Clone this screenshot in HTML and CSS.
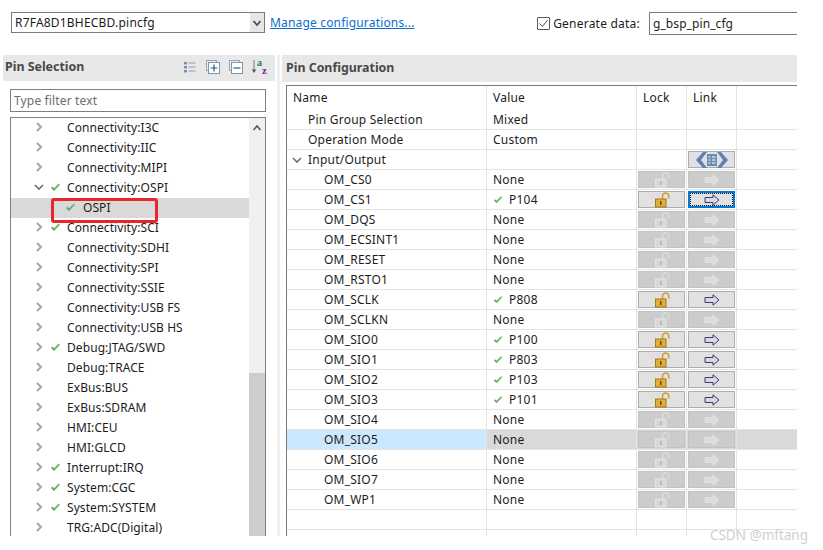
FILE: index.html
```html
<!DOCTYPE html>
<html lang="en">
<head>
<meta charset="utf-8">
<title>Pin Configuration</title>
<link rel="stylesheet" href="styles.css">
</head>
<body>
<svg class="defs" width="0" height="0" aria-hidden="true">
  <symbol id="chev-r" viewBox="0 0 10 10"><path d="M3 1l4 4-4 4" fill="none" stroke="#a6a6a6" stroke-width="2"/></symbol>
  <symbol id="chev-d" viewBox="0 0 10 10"><path d="M1 3l4 4 4-4" fill="none" stroke="#6e6e6e" stroke-width="1.6"/></symbol>
  <symbol id="check" viewBox="0 0 10 10"><path d="M1 5.5l2.6 2.6L9 2.2 8 1.6 3.6 5.8 2.2 4.4z" fill="#5aa75a" stroke="#8cc98c" stroke-width=".5"/></symbol>
  <symbol id="lock-on" viewBox="0 0 16 16"><path d="M8.5 7V4a3.2 3.2 0 0 1 6.2-1V6.5" fill="none" stroke="#d3a02c" stroke-width="1.5"/><rect x="1.5" y="7" width="10.5" height="8" fill="#e2ad38" stroke="#a9781a"/><rect x="6" y="9" width="1.6" height="4" fill="#6d4c0f"/></symbol>
  <symbol id="lock-off" viewBox="0 0 16 16"><path d="M8.5 7V4a3.2 3.2 0 0 1 6.2-1V6.5" fill="none" stroke="#dedede" stroke-width="1.3"/><rect x="1.5" y="7" width="10.5" height="8" fill="#d8d8d8" stroke="#e4e4e4"/><rect x="6" y="9" width="1.6" height="4" fill="#b4b4b4"/></symbol>
  <symbol id="arrow-on" viewBox="0 0 16 12"><path d="M1 3.5h8V.8L15 6l-6 5.2V8.5H1z" fill="#d9d6ee" stroke="#3e3e58"/></symbol>
  <symbol id="arrow-off" viewBox="0 0 16 12"><path d="M1 3.5h8V.8L15 6l-6 5.2V8.5H1z" fill="#dcdcdc" stroke="#e2e2e2"/></symbol>
</svg>

<div class="page">
  <header class="topbar">
    <div class="combo">
      <span class="combo-text">R7FA8D1BHECBD.pincfg</span>
      <span class="combo-btn"><svg width="10" height="10" viewBox="0 0 10 10"><path d="M1.5 3l3.5 4 3.5-4" fill="none" stroke="#444" stroke-width="1.6"/></svg></span>
    </div>
    <a class="manage" href="#">Manage configurations...</a>
    <span class="spacer"></span>
    <span class="checkbox"><svg width="11" height="11" viewBox="0 0 11 11"><path d="M1.5 5.5l3 3 5-6.5" fill="none" stroke="#555" stroke-width="1"/></svg></span>
    <span class="gen-label">Generate data:</span>
    <div class="gen-input">g_bsp_pin_cfg</div>
  </header>

  <main class="panels">
    <section class="left">
      <div class="title-bar left-title">
        <span class="title">Pin Selection</span>
        <span class="tools">
          <svg width="14" height="14" viewBox="0 0 14 14"><g fill="#6f8fb0"><rect x="1" y="2" width="3" height="2.4"/><rect x="1" y="6" width="3" height="2.4"/><rect x="1" y="10" width="3" height="2.4"/></g><g stroke="#8aa0b8"><path d="M5.5 3h7M5.5 7h7M5.5 11h7"/></g></svg>
          <svg width="14" height="14" viewBox="0 0 14 14"><rect x=".5" y=".5" width="10" height="10" fill="#eef0f4" stroke="#9aa5b4"/><rect x="2.5" y="2.5" width="11" height="11" fill="#fff" stroke="#7f93ab"/><path d="M8 4.5v7M4.500 8h7" stroke="#1d5b8a" stroke-width="1.2"/></svg>
          <svg width="14" height="14" viewBox="0 0 14 14"><rect x=".5" y=".5" width="10" height="10" fill="#eef0f4" stroke="#9aa5b4"/><rect x="2.5" y="2.5" width="11" height="11" fill="#fff" stroke="#7f93ab"/><path d="M4.500 8h7" stroke="#1d5b8a" stroke-width="1.2"/></svg>
          <svg class="az" width="18" height="22" viewBox="0 0 18 22"><path d="M3 4v11" stroke="#777"/><path d="M.8 13.500L3 17l2.200-3.500z" fill="#555"/><text x="6" y="10" class="az-a">a<tspan class="az-z" dy="8">z</tspan></text></svg>
        </span>
      </div>
      <div class="filter">Type filter text</div>
      <div class="tree">
        <div class="tree-list">
          <div class="node"><svg class="tw"><use href="#chev-r"/></svg><span class="ck"></span>Connectivity:I3C</div>
          <div class="node"><svg class="tw"><use href="#chev-r"/></svg><span class="ck"></span>Connectivity:IIC</div>
          <div class="node"><svg class="tw"><use href="#chev-r"/></svg><span class="ck"></span>Connectivity:MIPI</div>
          <div class="node"><svg class="tw"><use href="#chev-d"/></svg><svg class="ck"><use href="#check"/></svg>Connectivity:OSPI</div>
          <div class="node child selected"><svg class="ck"><use href="#check"/></svg>OSPI</div>
          <div class="node"><svg class="tw"><use href="#chev-r"/></svg><svg class="ck"><use href="#check"/></svg>Connectivity:SCI</div>
          <div class="node"><svg class="tw"><use href="#chev-r"/></svg><span class="ck"></span>Connectivity:SDHI</div>
          <div class="node"><svg class="tw"><use href="#chev-r"/></svg><span class="ck"></span>Connectivity:SPI</div>
          <div class="node"><svg class="tw"><use href="#chev-r"/></svg><span class="ck"></span>Connectivity:SSIE</div>
          <div class="node"><svg class="tw"><use href="#chev-r"/></svg><span class="ck"></span>Connectivity:USB FS</div>
          <div class="node"><svg class="tw"><use href="#chev-r"/></svg><span class="ck"></span>Connectivity:USB HS</div>
          <div class="node"><svg class="tw"><use href="#chev-r"/></svg><svg class="ck"><use href="#check"/></svg>Debug:JTAG/SWD</div>
          <div class="node"><svg class="tw"><use href="#chev-r"/></svg><span class="ck"></span>Debug:TRACE</div>
          <div class="node"><svg class="tw"><use href="#chev-r"/></svg><span class="ck"></span>ExBus:BUS</div>
          <div class="node"><svg class="tw"><use href="#chev-r"/></svg><span class="ck"></span>ExBus:SDRAM</div>
          <div class="node"><svg class="tw"><use href="#chev-r"/></svg><span class="ck"></span>HMI:CEU</div>
          <div class="node"><svg class="tw"><use href="#chev-r"/></svg><span class="ck"></span>HMI:GLCD</div>
          <div class="node"><svg class="tw"><use href="#chev-r"/></svg><svg class="ck"><use href="#check"/></svg>Interrupt:IRQ</div>
          <div class="node"><svg class="tw"><use href="#chev-r"/></svg><svg class="ck"><use href="#check"/></svg>System:CGC</div>
          <div class="node"><svg class="tw"><use href="#chev-r"/></svg><svg class="ck"><use href="#check"/></svg>System:SYSTEM</div>
          <div class="node"><svg class="tw"><use href="#chev-r"/></svg><span class="ck"></span>TRG:ADC(Digital)</div>
        </div>
        <div class="scrollbar">
          <span class="scroll-up"><svg width="10" height="10" viewBox="0 0 10 10"><path d="M1.500 7L5 3l3.500 4" fill="none" stroke="#555" stroke-width="1.600"/></svg></span>
          <span class="scroll-thumb"></span>
        </div>
        <div class="callout"></div>
      </div>
    </section>

    <div class="sash"></div>

    <section class="right">
      <div class="title-bar right-title"><span class="title">Pin Configuration</span></div>
      <div class="table">
        <div class="row head"><div class="c name">Name</div><div class="c value">Value</div><div class="c lock">Lock</div><div class="c link">Link</div><div class="c fill"></div></div>
        <div class="row"><div class="c name l1">Pin Group Selection</div><div class="c value">Mixed</div><div class="c lock"></div><div class="c link"></div><div class="c fill"></div></div>
        <div class="row"><div class="c name l1">Operation Mode</div><div class="c value">Custom</div><div class="c lock"></div><div class="c link"></div><div class="c fill"></div></div>
        <div class="row"><div class="c name group"><svg class="tw2"><use href="#chev-d"/></svg>Input/Output</div><div class="c value"></div><div class="c lock"></div><div class="c link"><span class="btn on"><svg width="34" height="16" viewBox="0 0 34 16"><path d="M8 0L1 8l7 8h4L6 8l6-8z" fill="#5b84b1"/><path d="M26 0l7 8-7 8h-4l6-8-6-8z" fill="#5b84b1"/><rect x="12" y="2" width="10" height="12" fill="#6a8db3"/><path d="M13.500 5h2M13.500 8h2M13.500 11h2M17 5h3.500M17 8h3.500M17 11h3.500" stroke="#fff"/></svg></span></div><div class="c fill"></div></div>

        <div class="row"><div class="c name l2">OM_CS0</div><div class="c value">None</div><div class="c lock"><span class="btn"><svg class="lk"><use href="#lock-off"/></svg></span></div><div class="c link"><span class="btn"><svg class="ar"><use href="#arrow-off"/></svg></span></div><div class="c fill"></div></div>
        <div class="row"><div class="c name l2">OM_CS1</div><div class="c value"><svg class="vck"><use href="#check"/></svg>P104</div><div class="c lock"><span class="btn on"><svg class="lk"><use href="#lock-on"/></svg></span></div><div class="c link"><span class="btn on focus"><svg class="ar"><use href="#arrow-on"/></svg></span></div><div class="c fill"></div></div>
        <div class="row"><div class="c name l2">OM_DQS</div><div class="c value">None</div><div class="c lock"><span class="btn"><svg class="lk"><use href="#lock-off"/></svg></span></div><div class="c link"><span class="btn"><svg class="ar"><use href="#arrow-off"/></svg></span></div><div class="c fill"></div></div>
        <div class="row"><div class="c name l2">OM_ECSINT1</div><div class="c value">None</div><div class="c lock"><span class="btn"><svg class="lk"><use href="#lock-off"/></svg></span></div><div class="c link"><span class="btn"><svg class="ar"><use href="#arrow-off"/></svg></span></div><div class="c fill"></div></div>
        <div class="row"><div class="c name l2">OM_RESET</div><div class="c value">None</div><div class="c lock"><span class="btn"><svg class="lk"><use href="#lock-off"/></svg></span></div><div class="c link"><span class="btn"><svg class="ar"><use href="#arrow-off"/></svg></span></div><div class="c fill"></div></div>
        <div class="row"><div class="c name l2">OM_RSTO1</div><div class="c value">None</div><div class="c lock"><span class="btn"><svg class="lk"><use href="#lock-off"/></svg></span></div><div class="c link"><span class="btn"><svg class="ar"><use href="#arrow-off"/></svg></span></div><div class="c fill"></div></div>
        <div class="row"><div class="c name l2">OM_SCLK</div><div class="c value"><svg class="vck"><use href="#check"/></svg>P808</div><div class="c lock"><span class="btn on"><svg class="lk"><use href="#lock-on"/></svg></span></div><div class="c link"><span class="btn on"><svg class="ar"><use href="#arrow-on"/></svg></span></div><div class="c fill"></div></div>
        <div class="row"><div class="c name l2">OM_SCLKN</div><div class="c value">None</div><div class="c lock"><span class="btn"><svg class="lk"><use href="#lock-off"/></svg></span></div><div class="c link"><span class="btn"><svg class="ar"><use href="#arrow-off"/></svg></span></div><div class="c fill"></div></div>
        <div class="row"><div class="c name l2">OM_SIO0</div><div class="c value"><svg class="vck"><use href="#check"/></svg>P100</div><div class="c lock"><span class="btn on"><svg class="lk"><use href="#lock-on"/></svg></span></div><div class="c link"><span class="btn on"><svg class="ar"><use href="#arrow-on"/></svg></span></div><div class="c fill"></div></div>
        <div class="row"><div class="c name l2">OM_SIO1</div><div class="c value"><svg class="vck"><use href="#check"/></svg>P803</div><div class="c lock"><span class="btn on"><svg class="lk"><use href="#lock-on"/></svg></span></div><div class="c link"><span class="btn on"><svg class="ar"><use href="#arrow-on"/></svg></span></div><div class="c fill"></div></div>
        <div class="row"><div class="c name l2">OM_SIO2</div><div class="c value"><svg class="vck"><use href="#check"/></svg>P103</div><div class="c lock"><span class="btn on"><svg class="lk"><use href="#lock-on"/></svg></span></div><div class="c link"><span class="btn on"><svg class="ar"><use href="#arrow-on"/></svg></span></div><div class="c fill"></div></div>
        <div class="row"><div class="c name l2">OM_SIO3</div><div class="c value"><svg class="vck"><use href="#check"/></svg>P101</div><div class="c lock"><span class="btn on"><svg class="lk"><use href="#lock-on"/></svg></span></div><div class="c link"><span class="btn on"><svg class="ar"><use href="#arrow-on"/></svg></span></div><div class="c fill"></div></div>
        <div class="row"><div class="c name l2">OM_SIO4</div><div class="c value">None</div><div class="c lock"><span class="btn"><svg class="lk"><use href="#lock-off"/></svg></span></div><div class="c link"><span class="btn"><svg class="ar"><use href="#arrow-off"/></svg></span></div><div class="c fill"></div></div>
        <div class="row sel"><div class="c name l2">OM_SIO5</div><div class="c value">None</div><div class="c lock"><span class="btn"><svg class="lk"><use href="#lock-off"/></svg></span></div><div class="c link"><span class="btn"><svg class="ar"><use href="#arrow-off"/></svg></span></div><div class="c fill"></div></div>
        <div class="row"><div class="c name l2">OM_SIO6</div><div class="c value">None</div><div class="c lock"><span class="btn"><svg class="lk"><use href="#lock-off"/></svg></span></div><div class="c link"><span class="btn"><svg class="ar"><use href="#arrow-off"/></svg></span></div><div class="c fill"></div></div>
        <div class="row"><div class="c name l2">OM_SIO7</div><div class="c value">None</div><div class="c lock"><span class="btn"><svg class="lk"><use href="#lock-off"/></svg></span></div><div class="c link"><span class="btn"><svg class="ar"><use href="#arrow-off"/></svg></span></div><div class="c fill"></div></div>
        <div class="row"><div class="c name l2">OM_WP1</div><div class="c value">None</div><div class="c lock"><span class="btn"><svg class="lk"><use href="#lock-off"/></svg></span></div><div class="c link"><span class="btn"><svg class="ar"><use href="#arrow-off"/></svg></span></div><div class="c fill"></div></div>
        <div class="row"><div class="c name"></div><div class="c value"></div><div class="c lock"></div><div class="c link"></div><div class="c fill"></div></div>
        <div class="row tail"><div class="c name"></div><div class="c value"></div><div class="c lock"></div><div class="c link"></div><div class="c fill"></div></div>
      </div>
    </section>
  </main>
  <div class="watermark">CSDN @mftang</div>
</div>
</body>
</html>
```

FILE: styles.css
```css
* { box-sizing: border-box; }
html, body { margin: 0; padding: 0; background: #fff; }
body { font-family: "Noto Sans", "Open Sans", sans-serif; font-size: 12px; color: #1c1c1c; }
.defs { position: absolute; }
.page { position: relative; width: 823px; height: 550px; overflow: hidden; background: #fff; }

.topbar { display: flex; align-items: flex-start; height: 55px; padding: 12px 26px 0 11px; }
.combo { display: flex; width: 254px; height: 21px; border: 1px solid #7a7a7a; }
.combo-text { flex: 1; padding-left: 3px; line-height: 19px; letter-spacing: .2px; }
.combo-btn { display: flex; align-items: center; justify-content: center; width: 14px; background: #e6e6e6; }
.manage { margin-left: 5px; line-height: 21px; color: #0a6fd0; text-decoration: underline; letter-spacing: .17px; }
.spacer { flex: 1; }
.checkbox { display: flex; align-items: center; justify-content: center; width: 13px; height: 13px; margin-top: 5px; border: 1px solid #5a5a5a; border-radius: 1px; }
.gen-label { margin-left: 3px; line-height: 24px; letter-spacing: .22px; }
.gen-input { width: 148px; height: 23px; margin-left: 9px; padding-left: 3px; line-height: 22px; border: 1px solid #7a7a7a; border-right: 0; letter-spacing: .08px; }

.panels { display: flex; height: 481px; }
.left { width: 272px; margin-left: 3px; }
.sash { width: 3px; margin: 0 2px; background: #f0f0f0; }
.right { width: 515px; }

.title-bar { display: flex; align-items: center; background: #e8e8e8; }
.left-title { height: 26px; padding: 0 6px 3px 2px; justify-content: space-between; }
.right-title { height: 27px; padding: 0 0 2px 4px; }
.title { font-size: 12.4px; font-weight: 700; color: #484848; }
.tools { display: flex; align-items: center; gap: 9px; height: 20px; }
.az { margin-left: -1px; }
.az-a { font: 700 10px "Liberation Serif", serif; fill: #23806a; }
.az-z { font: 700 11px "Liberation Serif", serif; fill: #8a2b8a; }

.filter { width: 256px; height: 23px; margin: 8px 0 0 7px; padding-left: 3px; line-height: 22px; color: #6d6d6d; border: 1px solid #7f7f7f; letter-spacing: .15px; }
.tree { position: relative; display: flex; width: 256px; height: 419px; margin: 5px 0 0 7px; border: 1px solid #7f7f7f; border-bottom: 0; }
.tree-list { flex: 1; min-width: 0; }
.node { display: flex; align-items: center; height: 20px; padding: 0 0 2px 23px; white-space: nowrap; letter-spacing: .08px; }
.node.child { padding-left: 54px; }
.node.selected { background: #d9d9d9; }
.tw { width: 10px; height: 10px; flex: none; }
.ck { width: 11px; height: 11px; flex: none; margin: 0 6px; }
.child .ck { margin: 0 7px 0 0; }
.scrollbar { display: flex; flex-direction: column; justify-content: space-between; width: 16px; flex: none; background: #f0f0f0; }
.scroll-up { display: flex; align-items: center; justify-content: center; height: 20px; }
.scroll-thumb { height: 163px; background: #cdcdcd; }
.callout { position: absolute; left: 40px; top: 80px; width: 107px; height: 25px; border: 3px solid #e8262a; border-radius: 3px; }

.table { width: 511px; height: 451px; margin: 3px 0 0 4px; border-top: 1px solid #7a7a7a; border-left: 1px solid #7a7a7a; overflow: hidden; }
.row { display: grid; grid-template-columns: 200px 150px 50px 50px 60px; height: 20px; border-bottom: 1px solid #e4e4e4; letter-spacing: .22px; }
.row.head { height: 24px; border-bottom: 0; }
.row.head .c { padding-bottom: 1px; }
.row.tail { border-bottom: 0; }
.c { display: flex; align-items: center; min-width: 0; border-right: 1px solid #e4e4e4; white-space: nowrap; }
.c.fill { border-right: 0; }
.name { padding-left: 6px; }
.name.l1 { padding-left: 21px; }
.name.l2 { padding-left: 37px; }
.name.group { padding-left: 5px; }
.value { padding-left: 6px; }
.lock, .link { padding: 0 1px; }
.row.head .lock, .row.head .link { padding-left: 6px; }
.tw2 { width: 10px; height: 10px; margin-right: 6px; flex: none; }
.vck { width: 10px; height: 10px; margin-right: 6px; flex: none; }
.row.sel { background: #d9d9d9; }
.row.sel .name { background: #cce8ff; }

.btn { display: flex; align-items: center; justify-content: center; width: 47px; height: 17px; background: #cccccc; border: 1px solid #c2c2c2; }
.btn.on { background: #e1e1e1; border-color: #adadad; }
.btn.focus { border: 2px solid #0078d7; outline: 1px dotted #111; outline-offset: -3px; }
.lk { width: 16px; height: 16px; }
.ar { width: 16px; height: 12px; }

.watermark { position: absolute; right: 15px; bottom: 6px; font-size: 13.5px; color: #cfcfcf; }
```
